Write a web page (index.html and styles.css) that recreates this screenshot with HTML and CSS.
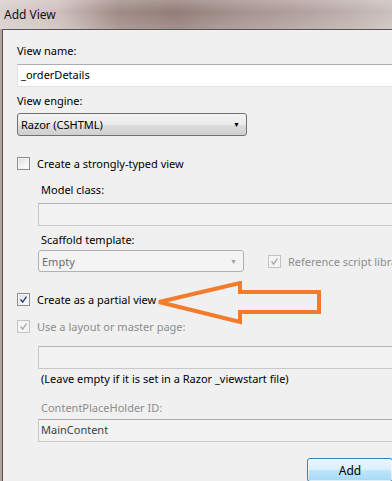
FILE: index.html
```html
<!DOCTYPE html>
<html lang="en">

<head>
    <meta charset="UTF-8">
    <title>Add View</title>
    <link rel="stylesheet" href="styles.css">
</head>

<body>
    <div class="window">
        <div class="titlebar">Add View</div>
        <div class="frame">
            <div class="panel">
                <div class="lbl first">View name:</div>
                <div class="textbox name-box">_orderDetails</div>

                <div class="lbl engine-lbl">View engine:</div>
                <div class="combo engine">
                    <span>Razor (CSHTML)</span>
                    <span class="drop">&#9660;</span>
                </div>

                <div class="check-row typed">
                    <span class="box"></span>
                    <span>Create a strongly-typed view</span>
                </div>

                <div class="indent">
                    <div class="lbl model-lbl">Model class:</div>
                    <div class="textbox disabled model-box"></div>
                    <div class="lbl scaffold-lbl">Scaffold template:</div>
                    <div class="scaffold-row">
                        <div class="combo disabled scaffold">
                            <span>Empty</span>
                            <span class="drop">&#9660;</span>
                        </div>
                        <div class="check-row disabled ref">
                            <span class="box checked"><svg viewBox="0 0 13 13"><path d="M3 6.5 L5.5 9.5 L10 3" /></svg></span>
                            <span>Reference script libraries</span>
                        </div>
                    </div>
                </div>

                <div class="check-row partial">
                    <span class="box checked"><svg viewBox="0 0 13 13"><path d="M3 6.5 L5.5 9.5 L10 3" /></svg></span>
                    <span>Create as a partial view</span>
                </div>

                <div class="check-row disabled layout">
                    <span class="box checked"><svg viewBox="0 0 13 13"><path d="M3 6.5 L5.5 9.5 L10 3" /></svg></span>
                    <span>Use a layout or master page:</span>
                </div>

                <div class="indent">
                    <div class="textbox disabled layout-box"></div>
                    <div class="lbl hint">(Leave empty if it is set in a Razor _viewstart file)</div>
                    <div class="lbl disabled-lbl holder-lbl">ContentPlaceHolder ID:</div>
                    <div class="textbox holder-box">MainContent</div>
                </div>

                <button class="add-btn">Add</button>

                <!-- annotation drawn on top of the screenshot -->
                <svg class="arrow" width="180" height="50" viewBox="0 0 180 50">
                    <polygon points="4,21 85,2 85,11 164,11 164,31 85,31 85,41" />
                </svg>
            </div>
        </div>
    </div>
</body>

</html>
```

FILE: styles.css
```css
body {
    margin: 0;
    width: 392px;
    height: 481px;
    overflow: hidden;
    font-family: "Noto Sans", "Open Sans", sans-serif;
    font-size: 11px;
    color: #000;
    background: #b9a9a5;
}

.window {
    width: 392px;
    height: 481px;
    display: flex;
    flex-direction: column;
}

.titlebar {
    height: 29px;
    line-height: 30px;
    padding-left: 4px;
    font-size: 12px;
    color: #111;
    background:
        linear-gradient(180deg, rgba(255, 255, 255, 0.2) 0%, rgba(255, 255, 255, 0) 40%, rgba(255, 255, 255, 0.15) 100%),
        linear-gradient(90deg, #d9d0ce 0%, #cdc0bd 15%, #a08b86 30%, #937d78 45%, #a3918d 60%, #b09f9c 75%, #bfb1ae 90%, #cbc0be 100%);
}

.frame {
    flex: 1;
    padding-left: 2px;
    background: #b4a4a0;
    display: flex;
}

.panel {
    position: relative;
    flex: 1;
    background: #f0f0f0;
    border-top: 1px solid #5b5350;
    border-left: 1px solid #5b5350;
    padding: 13px 0 0 14px;
}

.lbl {
    line-height: 15px;
    height: 15px;
    white-space: nowrap;
}

.engine-lbl {
    margin-top: 6px;
}

.model-lbl {
    margin-top: 11px;
}

.scaffold-lbl {
    margin-top: 6px;
}

.hint {
    margin-top: 2px;
}

.disabled-lbl {
    color: #8d8d8d;
}

.holder-lbl {
    margin-top: 14px;
}

.indent {
    padding-left: 21px;
}

.indent .lbl {
    padding-left: 3px;
}

.textbox {
    box-sizing: border-box;
    width: 420px;
    height: 23px;
    line-height: 20px;
    padding-left: 3px;
    background: #fff;
    border: 1px solid #e2e3ea;
    border-top-color: #abadb3;
    white-space: nowrap;
}

.name-box {
    margin-top: 6px;
}

.textbox.disabled {
    background: #f2f2f2;
    border-color: #c7c9cc;
    border-top-color: #b2b4b8;
}

.model-box {
    margin-top: 6px;
}

.layout-box {
    margin-top: 12px;
}

.holder-box {
    margin-top: 4px;
    padding-left: 2px;
    background: #f2f2f2;
    border-color: #c7c9cc;
    border-top-color: #a9abaf;
    color: #3f3f3f;
}

.combo {
    box-sizing: border-box;
    width: 230px;
    height: 23px;
    padding: 0 6px 0 3px;
    display: flex;
    align-items: center;
    justify-content: space-between;
    border: 1px solid #707070;
    border-radius: 3px;
    background: linear-gradient(180deg, #f3f3f3 0%, #ebebeb 50%, #dddddd 51%, #cfcfcf 100%);
}

.engine {
    margin-top: 5px;
}

.drop {
    font-size: 7px;
    color: #000;
}

.combo.disabled {
    width: 206px;
    height: 22px;
    border-color: #adb2b5;
    background: #f4f4f4;
    color: #6d6d6d;
}

.combo.disabled .drop {
    color: #a0a0a0;
}

.scaffold-row {
    margin-top: 3px;
    display: flex;
    align-items: center;
}

.check-row {
    display: flex;
    align-items: center;
    height: 15px;
    line-height: 15px;
    white-space: nowrap;
}

.check-row .box {
    box-sizing: border-box;
    width: 13px;
    height: 13px;
    margin-right: 7px;
    border: 1px solid #8e8f8f;
    background: linear-gradient(135deg, #dcdcdc 0%, #f4f4f4 60%, #ffffff 100%);
    box-shadow: inset 0 0 0 1px #f4f4f4;
}

.check-row .box svg {
    display: block;
    width: 11px;
    height: 11px;
}

.check-row .box path {
    fill: none;
    stroke: #2a3d7a;
    stroke-width: 1.6;
}

.check-row.disabled {
    color: #8d8d8d;
}

.check-row.disabled .box {
    border-color: #c3c3c3;
    background: #f4f4f4;
}

.check-row.disabled .box path {
    stroke: #a8a8a8;
}

.typed {
    margin-top: 20px;
}

.ref {
    margin-left: 24px;
}

.partial {
    margin-top: 20px;
}

.layout {
    margin-top: 12px;
}

.add-btn {
    display: block;
    margin: 16px 0 0 290px;
    width: 86px;
    height: 24px;
    font-family: inherit;
    font-size: 12px;
    color: #000;
    border: 1px solid #3c7fb1;
    border-radius: 3px;
    background: linear-gradient(180deg, #eaf6fd 0%, #d9f0fc 50%, #bee6fd 51%, #a7d9f5 100%);
    box-shadow: inset 0 0 0 1px rgba(255, 255, 255, 0.6);
    padding: 0;
}

.arrow {
    position: absolute;
    left: 152px;
    top: 251px;
}

.arrow polygon {
    fill: none;
    stroke: #f47b2a;
    stroke-width: 4;
    stroke-linejoin: miter;
}
```
